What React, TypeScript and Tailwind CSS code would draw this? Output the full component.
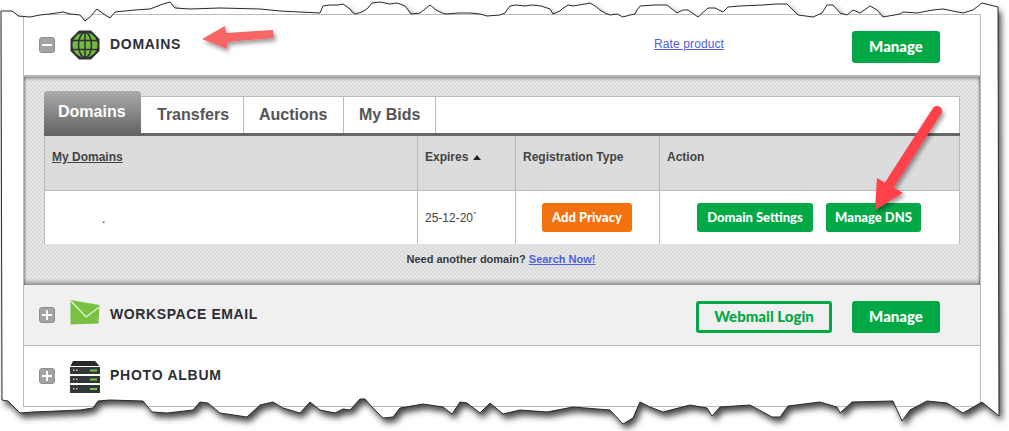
import React from "react";

const top: number[][] = [
  [1,11],[12,11],[16,14],[18,16],[30,17],[40,15],[50,14],[63,12],[70,14],[80,15],[85,21],[90,17],[97,9],[105,15],[110,18],[115,12],[135,10],[150,9],[163,4],[170,2],[175,8],[190,9],[220,8],[260,9],[280,11],[300,12],[320,13],[323,6],[330,5],
  [338,5],[343,4],[350,9],[352,12],[355,14],[362,12],[368,8],[372,3],[380,2],[385,3],[390,4],[397,3],[405,6],[408,10],[411,14],[420,13],[425,9],[430,5],[436,10],[440,12],[445,14],[460,13],[470,13],[480,14],[487,16],[500,15],[505,13],[507,10],[510,6],[516,5],[525,6],[532,5],[541,6],[550,9],[553,14],[560,11],[562,9],[568,5],[573,6],[585,4],[590,3],[595,6],[600,10],[605,13],[610,15],[617,14],[623,17],[630,15],[635,14],[637,10],[640,6],
  [655,5],[667,5],[672,9],[677,13],[683,10],[688,10],[698,17],[708,8],[715,8],[723,12],[728,7],[740,6],[763,5],[777,4],[787,4],[798,15],[813,17],[822,13],[827,5],[833,5],[840,13],[847,15],[853,10],[860,13],[870,6],[877,10],[883,17],[900,14],[903,12],[917,13],[933,10],[943,9],[963,13],[973,10],[982,3],[998,7],
];
const bottom: number[][] = [
  [2,400],[8,401],[20,413],[33,412],[57,411],[80,410],[93,408],[98,401],[110,400],[143,401],[152,412],[167,413],[193,410],[200,402],[208,403],[220,413],[247,417],[260,405],[273,402],[283,408],[300,413],[310,402],[320,410],
  [335,413],[343,409],[350,410],[360,399],[365,399],[372,407],[383,418],[393,417],[400,408],[423,404],[443,407],[452,414],[460,402],[467,403],[480,413],[490,403],[503,414],[520,410],[547,412],[573,407],[610,410],[623,424],[633,418],[640,402],
  [650,407],[663,412],[690,405],[707,408],[712,416],[720,407],[750,405],[772,417],[780,417],[788,406],[820,402],[837,407],[840,413],[852,402],[893,401],[902,421],[910,410],[927,401],[947,403],[963,413],[982,402],[999,416],
];
const pts = [...top, ...[...bottom].reverse()];
const paper = "M" + pts.map((p) => p.join(",")).join(" L") + " Z";

function Toggle({ plus }: { plus?: boolean }) {
  return (
    <div className="relative w-4 h-4 rounded-[3px] bg-[#a4a4a4] border border-[#8e8e8e] shrink-0">
      <div className="absolute left-[2px] top-[6px] w-[10px] h-[2px] bg-white" />
      {plus && <div className="absolute left-[6px] top-[2px] w-[2px] h-[10px] bg-white" />}
    </div>
  );
}

function Globe() {
  return (
    <svg width="30" height="30" viewBox="0 0 30 30" className="shrink-0">
      <polygon points="9,0.5 21,0.5 29.5,9 29.5,21 21,29.5 9,29.5 0.5,21 0.5,9" fill="#2f3135" />
      <circle cx="15" cy="15" r="12.5" fill="#72bb3f" />
      <ellipse cx="15" cy="15" rx="6.5" ry="12.5" fill="none" stroke="#2f3135" strokeWidth="1.5" />
      <line x1="15" y1="2" x2="15" y2="28" stroke="#2f3135" strokeWidth="1.5" />
      <line x1="3" y1="10.5" x2="27" y2="10.5" stroke="#2f3135" strokeWidth="1.5" />
      <line x1="3" y1="19.5" x2="27" y2="19.5" stroke="#2f3135" strokeWidth="1.5" />
    </svg>
  );
}

function Envelope() {
  return (
    <svg width="30" height="25" viewBox="0 0 30 25" className="shrink-0 -mt-[6px]">
      <polygon points="0.5,0 29.5,5 28.5,23.5 0.5,24.5" fill="#7ac143" />
      <polyline points="1,1 16,17 29.5,7" fill="none" stroke="#e4f2d8" strokeWidth="1.3" />
    </svg>
  );
}

function Server() {
  const slab = (y: number, h: number) => (
    <g key={y}>
      <rect x="0" y={y} width="30" height={h} fill="#35383b" />
      <rect x="20" y={y + h / 2 - 1} width="7" height="2" fill="#7ac143" />
      <rect x="3" y={y + h / 2 - 1} width="1.5" height="1.5" fill="#c8c8c8" />
      <rect x="6" y={y + h / 2 - 1} width="1.5" height="1.5" fill="#c8c8c8" />
    </g>
  );
  return (
    <svg width="30" height="32" viewBox="0 0 30 32" className="shrink-0">
      <polygon points="3,0 25,0 29.5,5 0.5,5" fill="#26282a" />
      {slab(6, 7)}
      {slab(15, 7)}
      {slab(24, 8)}
    </svg>
  );
}

const btn =
  "flex items-center justify-center rounded-[3px] font-['Lato',sans-serif] font-black text-white bg-[#00a846]";

export default function App() {
  return (
    <div className="relative w-[1009px] h-[431px] overflow-hidden bg-white font-['Liberation_Sans',Arial,sans-serif] pl-[23px] pt-[14px]">
      <div className="w-[958px] border-x border-t border-[#bbbbbb] bg-white">
        {/* Domains header */}
        <div className="h-[60px] flex items-center pl-[15px] pr-[40px]">
          <Toggle />
          <div className="ml-[15px]"><Globe /></div>
          <div className="ml-[10px] pb-[2px] flex-1 text-[14px] font-bold tracking-[0.7px] text-[#2c2e35]">DOMAINS</div>
          <a className="mr-[128px] text-[12px] tracking-[0.1px] underline text-[#4d62d8] -mt-[2px]">Rate product</a>
          <div className={`${btn} w-[88px] h-[32px] text-[15px] mt-[3px]`}>Manage</div>
        </div>

        {/* Expanded panel */}
        <div className="h-[210px] border-t-2 border-[#b5b5b5] bg-[repeating-conic-gradient(#d9d9d9_0_25%,#e8e8e8_0_50%)] bg-[length:4px_4px] shadow-[inset_0_3px_3px_-1px_rgba(0,0,0,0.3),inset_0_-4px_4px_-1px_rgba(0,0,0,0.35),inset_-2px_0_2px_-1px_rgba(0,0,0,0.25),inset_2px_0_2px_-1px_rgba(0,0,0,0.25)] pt-[14px] pl-[20px]">
          <div className="w-[916px]">
            <div className="flex items-end h-[42px]">
              <div className="w-[97px] h-[42px] rounded-t-[4px] bg-gradient-to-b from-[#acacac] to-[#666666] text-white font-bold text-[16px] pl-[14px] pt-[11px] leading-[20px]">
                Domains
              </div>
              <div className="flex-1 flex h-[37px] bg-white border-t border-r border-[#bbbbbb] text-[16px] font-bold text-[#555555] leading-[20px]">
                <div className="w-[103px] pl-[16px] pt-[8px] border-r border-[#bbbbbb]">Transfers</div>
                <div className="w-[100px] pl-[15px] pt-[8px] border-r border-[#bbbbbb]">Auctions</div>
                <div className="w-[92px] pl-[15px] pt-[8px] border-r border-[#bbbbbb]">My Bids</div>
                <div className="flex-1" />
              </div>
            </div>
            <div className="h-[3px] bg-[#666666]" />

            <div className="grid grid-cols-[373px_98px_144px_301px] text-[12px] text-[#444444]">
              <div className="h-[55px] bg-[#dcdcdc] border-l border-b border-[#bbbbbb] pl-[7px] pt-[14px] leading-[14px] font-bold underline">
                My Domains
              </div>
              <div className="h-[55px] bg-[#dcdcdc] border-l border-b border-[#bbbbbb] pl-[7px] pt-[14px] leading-[14px] font-bold flex items-start gap-[5px]">
                Expires
                <svg width="8" height="5" viewBox="0 0 8 5" className="mt-[5px]"><polygon points="4,0 8,5 0,5" fill="#222" /></svg>
              </div>
              <div className="h-[55px] bg-[#dcdcdc] border-l border-b border-[#bbbbbb] pl-[7px] pt-[14px] leading-[14px] font-bold">
                Registration Type
              </div>
              <div className="h-[55px] bg-[#dcdcdc] border-x border-b border-[#bbbbbb] pl-[7px] pt-[14px] leading-[14px] font-bold">
                Action
              </div>

              <div className="h-[53px] bg-white border-l border-[#bbbbbb] pl-[57px] pt-[21px] leading-[14px] text-[#222255]">.</div>
              <div className="h-[53px] bg-white border-l border-[#bbbbbb] pl-[7px] flex items-center pt-[1px]">25-12-20´</div>
              <div className="h-[53px] bg-white border-l border-[#bbbbbb] flex items-center justify-center pb-[1px] pr-[1px]">
                <div className={`${btn} w-[90px] h-[29px] pt-[1px] text-[13px] !bg-[#f4710f]`}>Add Privacy</div>
              </div>
              <div className="h-[53px] bg-white border-x border-[#bbbbbb] flex items-center pl-[37px] gap-[13px] pb-[1px]">
                <div className={`${btn} w-[116px] h-[29px] pt-[1px] text-[13px]`}>Domain Settings</div>
                <div className={`${btn} w-[95px] h-[29px] pt-[1px] text-[13px]`}>Manage DNS</div>
              </div>
            </div>

            <div className="mt-[8px] text-center text-[11px] leading-[14px] font-bold text-[#333a45] pr-[2px]">
              Need another domain? <a className="underline text-[#4d62d8]">Search Now!</a>
            </div>
          </div>
        </div>

        {/* Workspace email */}
        <div className="h-[61px] bg-[#f0f0f0] border-b border-[#bbbbbb] flex items-center pl-[15px] pr-[40px]">
          <Toggle plus />
          <div className="ml-[15px]"><Envelope /></div>
          <div className="ml-[10px] pb-[2px] flex-1 text-[14px] font-bold tracking-[0.6px] text-[#2c2e35]">WORKSPACE EMAIL</div>
          <div className={`${btn} w-[136px] h-[32px] text-[15px] !bg-transparent !text-[#00a846] border-[3px] border-[#00a846] mr-[20px] mt-[3px]`}>
            Webmail Login
          </div>
          <div className={`${btn} w-[88px] h-[32px] text-[15px] mt-[3px]`}>Manage</div>
        </div>

        {/* Photo album */}
        <div className="h-[61px] border-b border-[#bbbbbb] flex items-center pl-[15px] pr-[40px]">
          <Toggle plus />
          <div className="ml-[15px] mt-[1px]"><Server /></div>
          <div className="ml-[10px] pb-[2px] flex-1 text-[14px] font-bold tracking-[0.75px] text-[#2c2e35]">PHOTO ALBUM</div>
        </div>
      </div>

      {/* Torn paper edge and callout arrows over the capture */}
      <svg className="absolute left-0 top-0 pointer-events-none" width="1009" height="431" viewBox="0 0 1009 431">
        <defs>
          <filter id="blur" x="-5%" y="-5%" width="110%" height="110%">
            <feGaussianBlur stdDeviation="3" />
          </filter>
          <filter id="ds" x="-30%" y="-30%" width="160%" height="160%">
            <feDropShadow dx="2" dy="3" stdDeviation="2" floodColor="#000" floodOpacity="0.4" />
          </filter>
          <clipPath id="outside">
            <path clipRule="evenodd" d={`M0,0 H1009 V431 H0 Z ${paper}`} />
          </clipPath>
        </defs>
        <path fillRule="evenodd" d={`M0,0 H1009 V431 H0 Z ${paper}`} fill="#fff" />
        <g clipPath="url(#outside)">
          <path d={paper} transform="translate(3,5)" fill="#444" filter="url(#blur)" />
        </g>
        <path d={paper} fill="none" stroke="#2a2a2a" strokeWidth="1" />

        <polygon filter="url(#ds)" points="202,39 225,26 226,33 273,30 274,38 227,42 227,49" fill="#f76565" />
        <g filter="url(#ds)">
          <line x1="937" y1="111" x2="888" y2="187" stroke="#ff4249" strokeWidth="10" strokeLinecap="round" />
          <polygon points="875,210 877,178 903,193" fill="#ff4249" />
        </g>
      </svg>
    </div>
  );
}
